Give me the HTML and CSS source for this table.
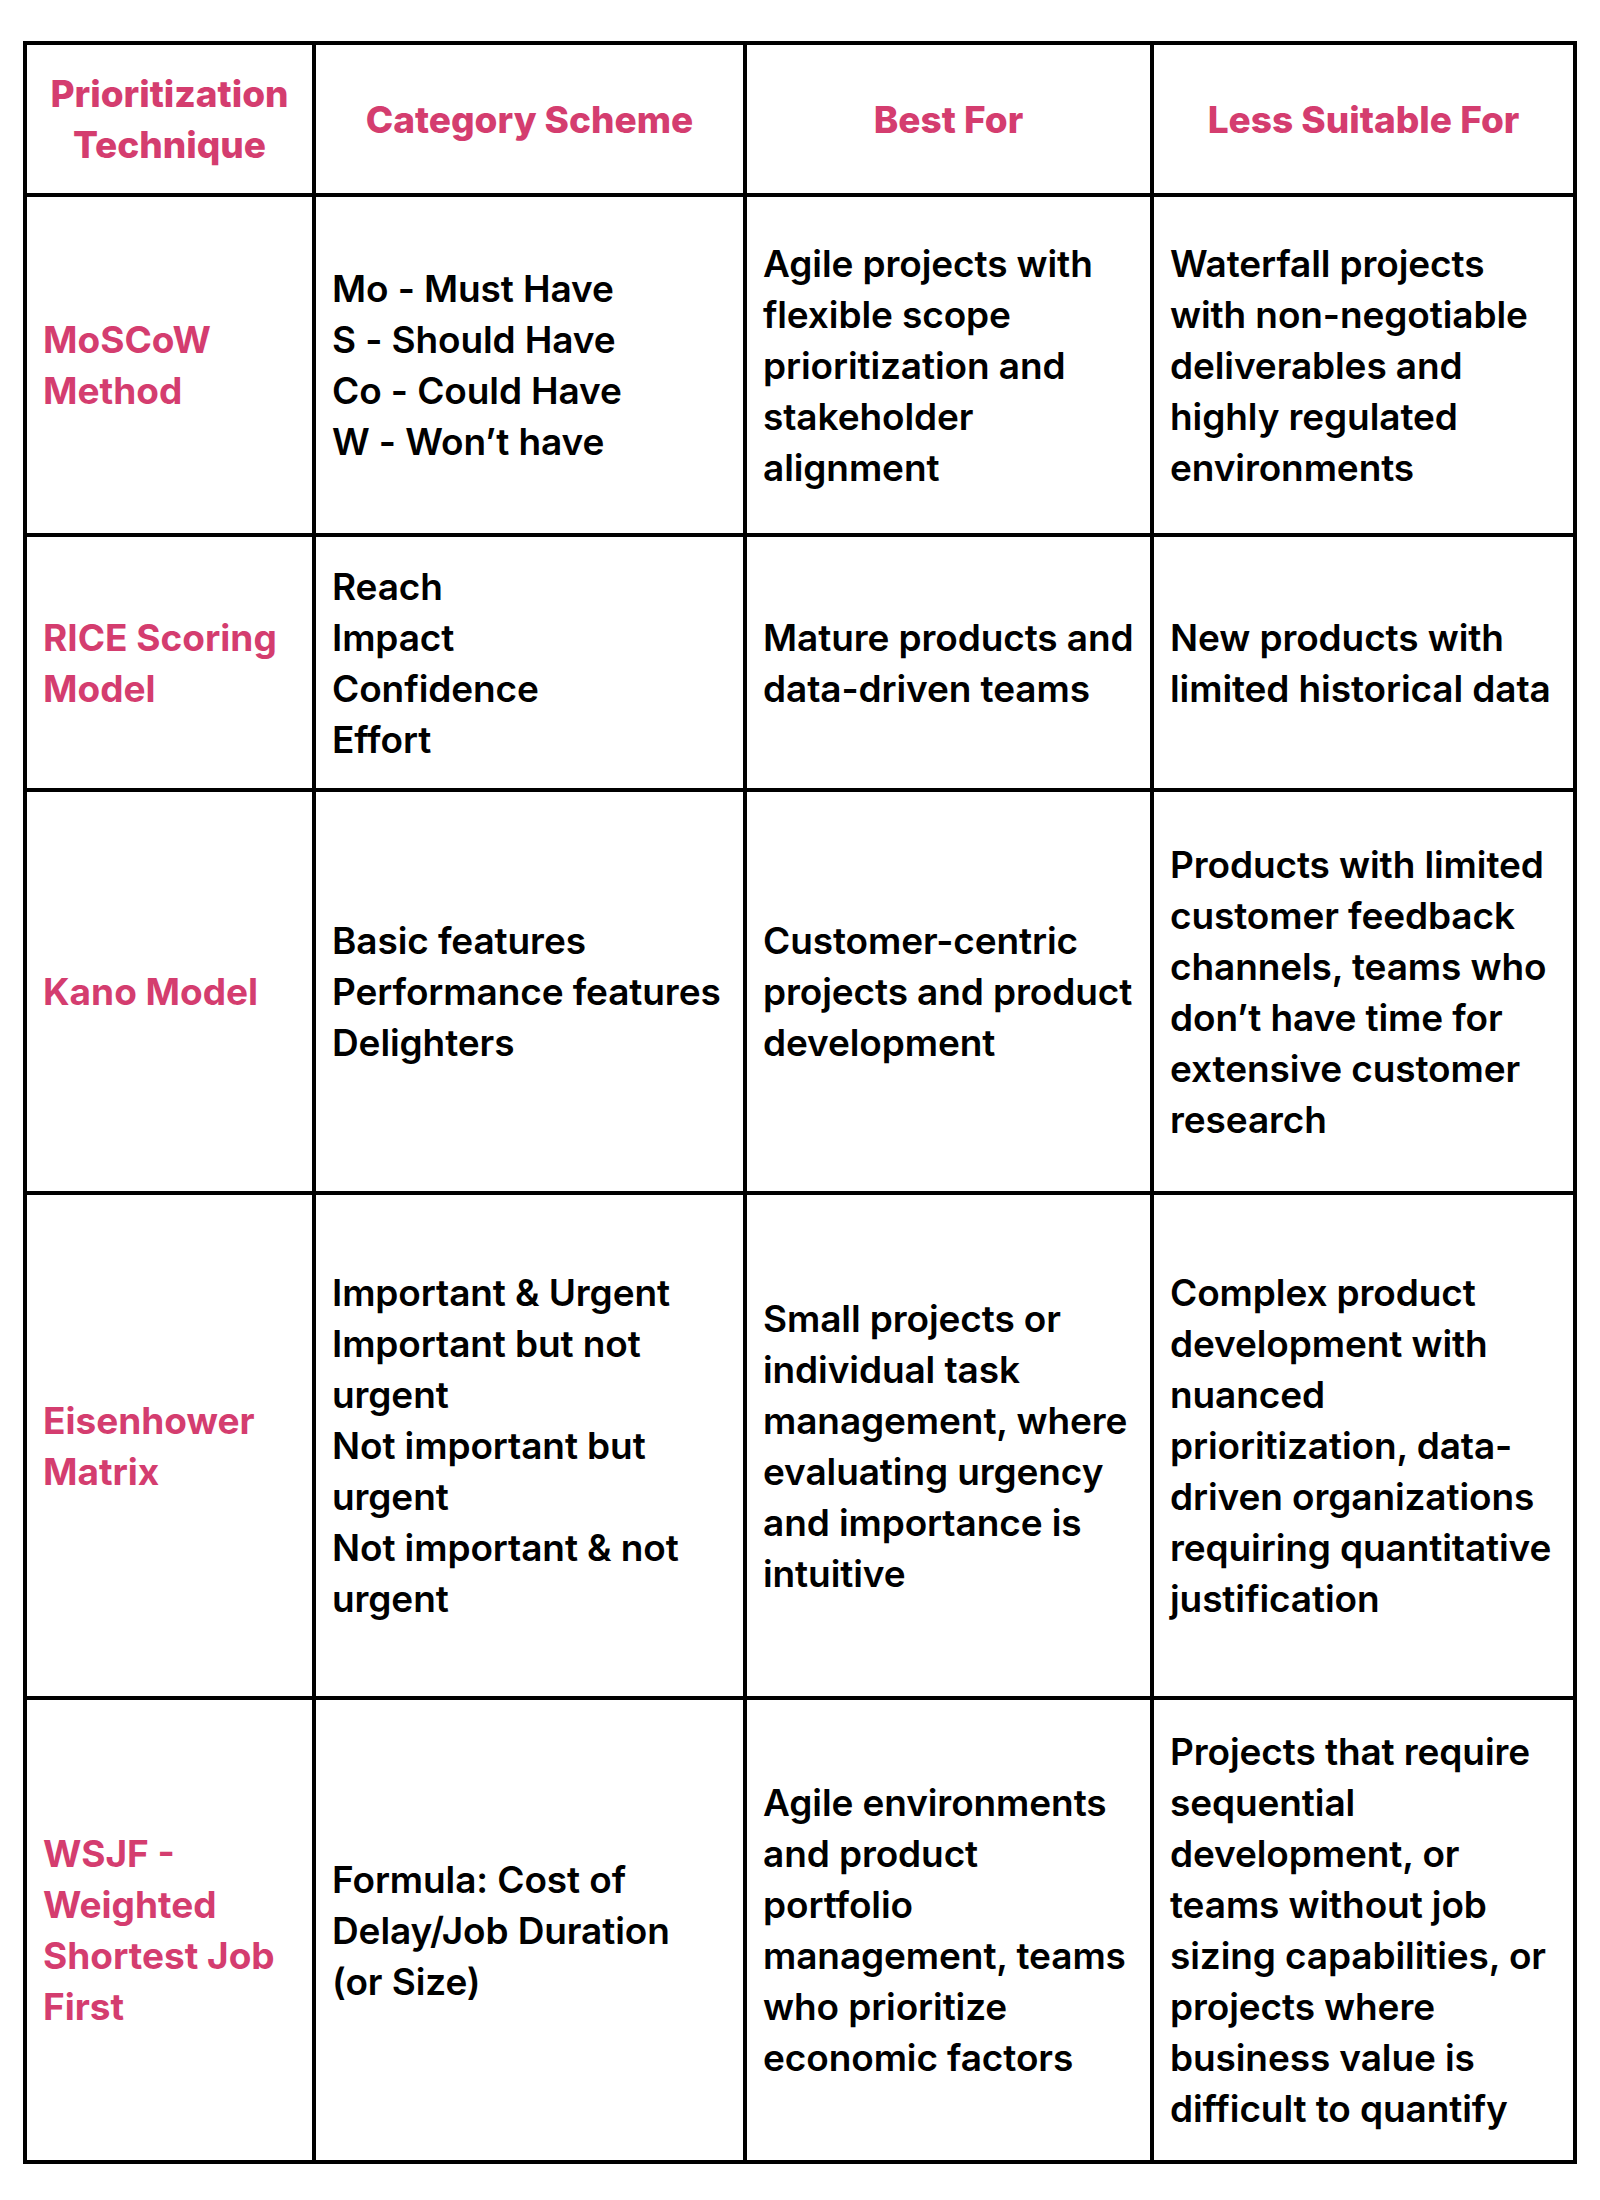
FILE: index.html
```html
<!DOCTYPE html>
<html lang="en">
<head>
<meta charset="utf-8">
<title>Prioritization Techniques</title>
<link rel="stylesheet" href="styles.css">
</head>
<body>
<div class="table">
  <div class="cell head">Prioritization<br>Technique</div>
  <div class="cell head">Category Scheme</div>
  <div class="cell head">Best For</div>
  <div class="cell head">Less Suitable For</div>

  <div class="cell name">MoSCoW<br>Method</div>
  <div class="cell">Mo - Must Have<br>S - Should Have<br>Co - Could Have<br>W - Won’t have</div>
  <div class="cell">Agile projects with<br>flexible scope<br>prioritization and<br>stakeholder<br>alignment</div>
  <div class="cell">Waterfall projects<br>with non-negotiable<br>deliverables and<br>highly regulated<br>environments</div>

  <div class="cell name">RICE Scoring<br>Model</div>
  <div class="cell">Reach<br>Impact<br>Confidence<br>Effort</div>
  <div class="cell">Mature products and<br>data-driven teams</div>
  <div class="cell">New products with<br>limited historical data</div>

  <div class="cell name">Kano Model</div>
  <div class="cell">Basic features<br>Performance features<br>Delighters</div>
  <div class="cell">Customer-centric<br>projects and product<br>development</div>
  <div class="cell">Products with limited<br>customer feedback<br>channels, teams who<br>don’t have time for<br>extensive customer<br>research</div>

  <div class="cell name">Eisenhower<br>Matrix</div>
  <div class="cell">Important &amp; Urgent<br>Important but not<br>urgent<br>Not important but<br>urgent<br>Not important &amp; not<br>urgent</div>
  <div class="cell">Small projects or<br>individual task<br>management, where<br>evaluating urgency<br>and importance is<br>intuitive</div>
  <div class="cell">Complex product<br>development with<br>nuanced<br>prioritization, data-<br>driven organizations<br>requiring quantitative<br>justification</div>

  <div class="cell name">WSJF -<br>Weighted<br>Shortest Job<br>First</div>
  <div class="cell">Formula: Cost of<br>Delay/Job Duration<br>(or Size)</div>
  <div class="cell">Agile environments<br>and product<br>portfolio<br>management, teams<br>who prioritize<br>economic factors</div>
  <div class="cell">Projects that require<br>sequential<br>development, or<br>teams without job<br>sizing capabilities, or<br>projects where<br>business value is<br>difficult to quantify</div>
</div>
</body>
</html>
```

FILE: styles.css
```css
html, body {
  margin: 0;
  padding: 0;
  background: #ffffff;
}

body {
  font-family: Inter, "Noto Sans", "Liberation Sans", sans-serif;
  color: #000000;
}

.table {
  display: grid;
  grid-template-columns: 289px 431px 407px 423px;
  grid-template-rows: 152px 340px 255px 403px 505px 464px;
  width: max-content;
  margin: 41px 0 0 23px;
  border-left: 4px solid #000;
  border-top: 4px solid #000;
}

.cell {
  box-sizing: border-box;
  border-right: 4px solid #000;
  border-bottom: 4px solid #000;
  padding: 0 16px;
  display: flex;
  flex-direction: column;
  justify-content: center;
  font-size: 37px;
  line-height: 51px;
  font-weight: 600;
  letter-spacing: -0.1px;
  white-space: nowrap;
}

.head {
  text-align: center;
  align-items: center;
  font-weight: 800;
  letter-spacing: 0;
  color: #d43d6f;
}

.name {
  font-weight: 700;
  letter-spacing: 0;
  color: #d43d6f;
}
```
